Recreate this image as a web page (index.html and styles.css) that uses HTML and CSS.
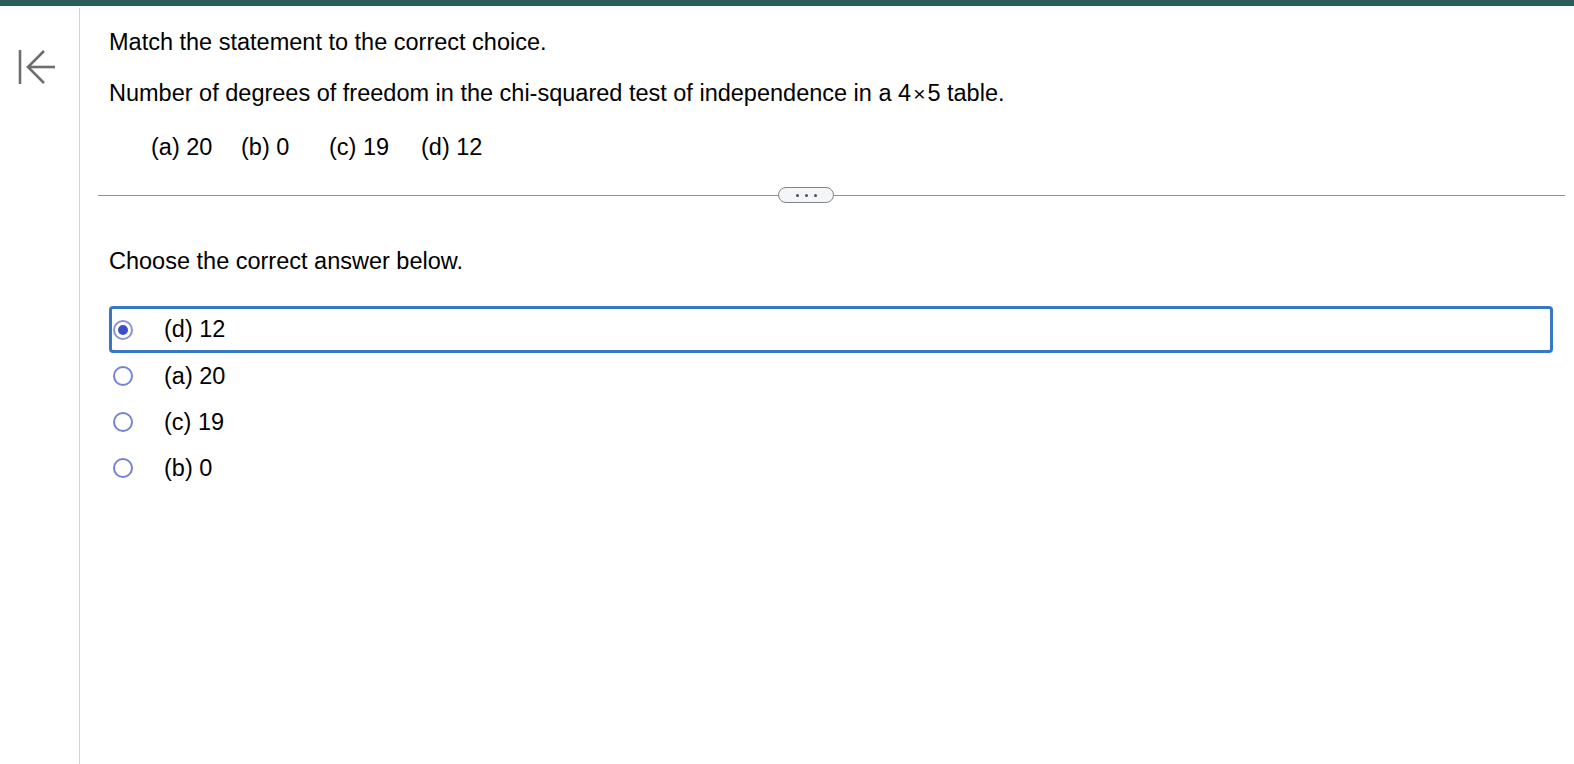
FILE: index.html
```html
<!DOCTYPE html>
<html>
<head>
<meta charset="utf-8">
<link rel="stylesheet" href="styles.css">
</head>
<body>
<div class="topbar"></div>
<div class="layout">
  <aside class="sidebar">
    <svg class="back" width="44" height="40" viewBox="0 0 44 40">
      <path d="M5 2 V36" stroke="#6e6e6e" stroke-width="2.6" fill="none"/>
      <path d="M13 19 H40" stroke="#6e6e6e" stroke-width="2.6" fill="none"/>
      <path d="M29 3 L13 19 L29 35" stroke="#6e6e6e" stroke-width="2.6" fill="none" stroke-linejoin="miter"/>
    </svg>
  </aside>
  <main class="main">
    <p class="line title">Match the statement to the correct choice.</p>
    <p class="line question">Number of degrees of freedom in the chi-squared test of independence in a 4<span class="times">×</span>5 table.</p>
    <div class="choices">
      <span>(a) 20</span>
      <span>(b) 0</span>
      <span>(c) 19</span>
      <span>(d) 12</span>
    </div>
    <div class="divider">
      <div class="rule rule-left"></div>
      <div class="pill"><span class="dot"></span><span class="dot"></span><span class="dot"></span></div>
      <div class="rule rule-right"></div>
    </div>
    <p class="line prompt">Choose the correct answer below.</p>
    <div class="options">
      <label class="option selected"><span class="radio checked"></span><span class="opt-text">(d) 12</span></label>
      <label class="option"><span class="radio"></span><span class="opt-text">(a) 20</span></label>
      <label class="option"><span class="radio"></span><span class="opt-text">(c) 19</span></label>
      <label class="option"><span class="radio"></span><span class="opt-text">(b) 0</span></label>
    </div>
  </main>
</div>
</body>
</html>
```
FILE: styles.css
```css
html, body {
  margin: 0;
  padding: 0;
  background: #ffffff;
}
body {
  font-family: "Liberation Sans", Arial, Helvetica, sans-serif;
  color: #000;
  width: 1574px;
  height: 764px;
  overflow: hidden;
}
.topbar {
  height: 6px;
  background: #2b5e56;
}
.layout {
  display: flex;
  height: 758px;
}
.sidebar {
  flex: none;
  border-right: 1px solid #d2d3da;
  margin-top: 2px;
  box-sizing: border-box;
  width: 80px;
  padding: 40px 0 0 15px;
}
.back {
  display: block;
}
.main {
  flex: 1;
  padding: 0 9px 0 18px;
}
.line {
  margin: 0;
  font-size: 23.5px;
  line-height: 24px;
  padding-left: 11px;
}
.title {
  margin-top: 24px;
}
.question {
  margin-top: 27px;
}
.times {
  font-size: 21px;
  padding: 0 2px;
}
.choices {
  display: grid;
  grid-template-columns: 90px 88px 92px auto;
  padding-left: 53px;
  margin-top: 29px;
  font-size: 23.5px;
  line-height: 24px;
}
.divider {
  display: flex;
  align-items: center;
  margin-top: 28px;
  height: 16px;
}
.rule {
  height: 1px;
  background: #87909d;
}
.rule-left {
  width: 680px;
}
.rule-right {
  flex: 1;
}
.pill {
  width: 56px;
  height: 16px;
  box-sizing: border-box;
  border: 1px solid #7d8592;
  border-radius: 8px;
  background: #f4f5f7;
  display: flex;
  align-items: center;
  justify-content: center;
  gap: 6px;
}
.dot {
  width: 3px;
  height: 3px;
  border-radius: 50%;
  background: #4a4f57;
}
.prompt {
  margin-top: 46px;
}
.options {
  margin-top: 33px;
  margin-left: 11px;
  margin-right: 12px;
  display: flex;
  flex-direction: column;
}
.option {
  display: flex;
  align-items: center;
  height: 46px;
  box-sizing: border-box;
  font-size: 23.5px;
  border: 3px solid transparent;
  border-radius: 4px;
  padding-left: 1px;
}
.option.selected {
  border-color: #3877c6;
  height: 47px;
}
.radio {
  width: 20px;
  height: 20px;
  box-sizing: border-box;
  border: 2px solid #7483d8;
  border-radius: 50%;
  position: relative;
  flex: none;
}
.radio.checked {
  border-color: #8592dc;
}
.radio.checked::after {
  content: "";
  position: absolute;
  left: 3px;
  top: 3px;
  width: 10px;
  height: 10px;
  border-radius: 50%;
  background: #3a4fc8;
}
.opt-text {
  margin-left: 31px;
}
```
